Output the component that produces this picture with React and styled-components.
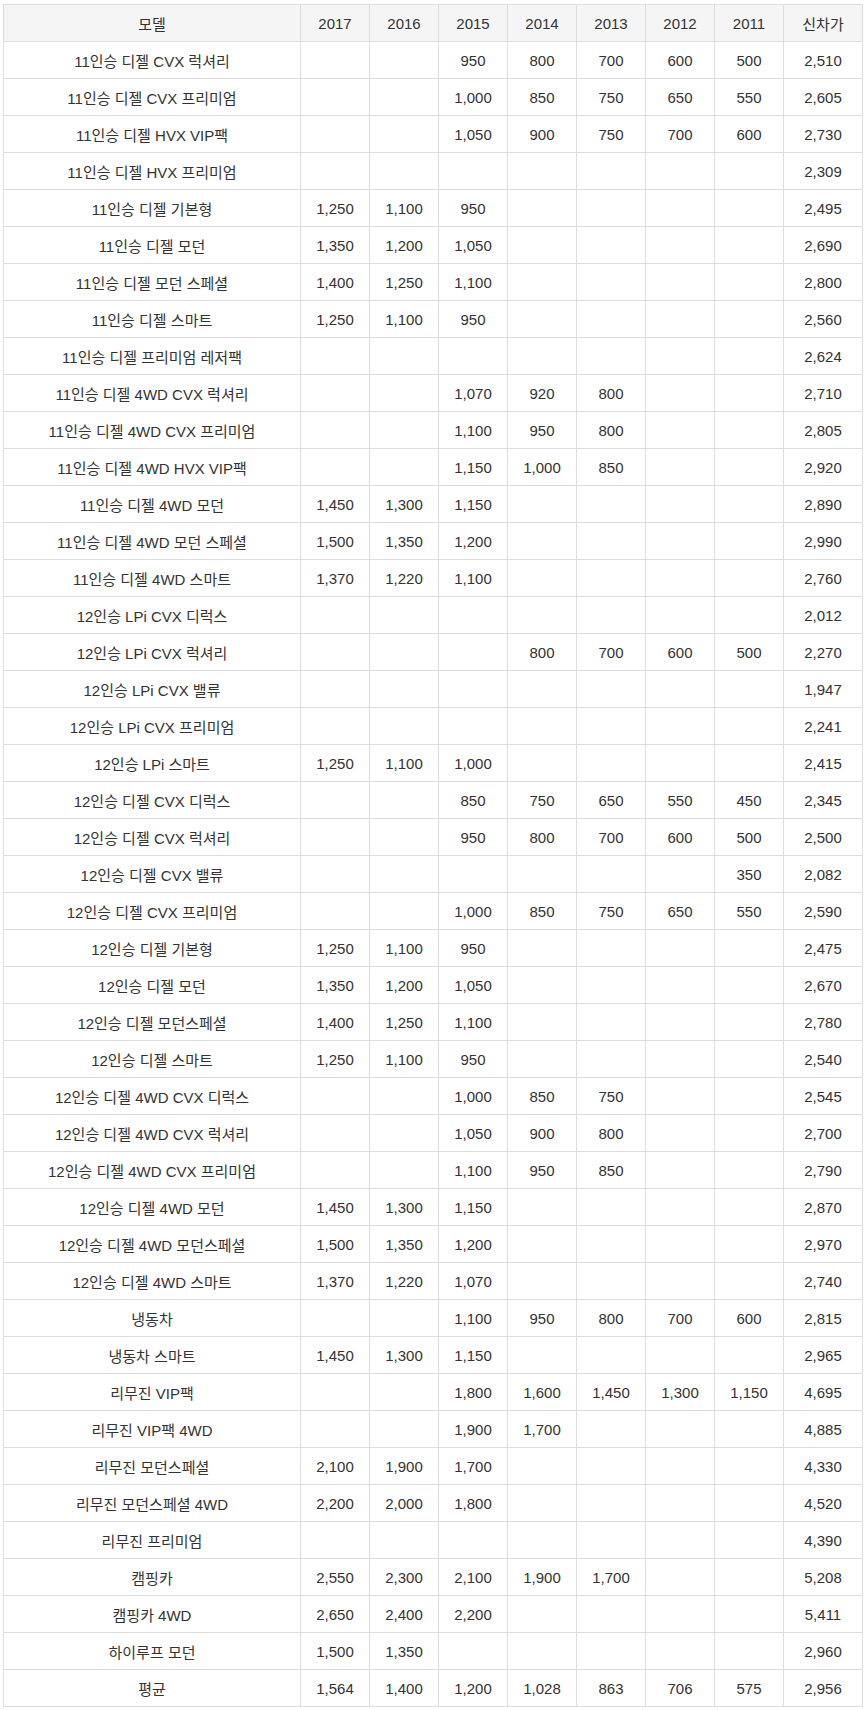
import styled, { createGlobalStyle } from "styled-components";

const GlobalStyle = createGlobalStyle`
  body {
    margin: 0;
    background: #fff;
  }
`;

const Wrapper = styled.div`
  padding: 4px 0 0 3px;
`;

const Table = styled.table`
  width: 860px;
  table-layout: fixed;
  border-collapse: collapse;
  font-family: "Liberation Sans", Arial, "Noto Sans CJK KR", sans-serif;
  font-size: 15px;
  color: #333;
`;

const HeadCell = styled.th`
  height: 36px;
  padding: 0 4px;
  border: 1px solid #ddd;
  background: #f5f5f5;
  font-weight: normal;
  text-align: center;
`;

const Cell = styled.td`
  height: 36px;
  padding: 0 4px;
  border: 1px solid #ddd;
  text-align: center;
  white-space: nowrap;
`;

const years = ["2017", "2016", "2015", "2014", "2013", "2012", "2011"];

const rows = [
  ["11인승 디젤 CVX 럭셔리", "", "", "950", "800", "700", "600", "500", "2,510"],
  ["11인승 디젤 CVX 프리미엄", "", "", "1,000", "850", "750", "650", "550", "2,605"],
  ["11인승 디젤 HVX VIP팩", "", "", "1,050", "900", "750", "700", "600", "2,730"],
  ["11인승 디젤 HVX 프리미엄", "", "", "", "", "", "", "", "2,309"],
  ["11인승 디젤 기본형", "1,250", "1,100", "950", "", "", "", "", "2,495"],
  ["11인승 디젤 모던", "1,350", "1,200", "1,050", "", "", "", "", "2,690"],
  ["11인승 디젤 모던 스페셜", "1,400", "1,250", "1,100", "", "", "", "", "2,800"],
  ["11인승 디젤 스마트", "1,250", "1,100", "950", "", "", "", "", "2,560"],
  ["11인승 디젤 프리미엄 레저팩", "", "", "", "", "", "", "", "2,624"],
  ["11인승 디젤 4WD CVX 럭셔리", "", "", "1,070", "920", "800", "", "", "2,710"],
  ["11인승 디젤 4WD CVX 프리미엄", "", "", "1,100", "950", "800", "", "", "2,805"],
  ["11인승 디젤 4WD HVX VIP팩", "", "", "1,150", "1,000", "850", "", "", "2,920"],
  ["11인승 디젤 4WD 모던", "1,450", "1,300", "1,150", "", "", "", "", "2,890"],
  ["11인승 디젤 4WD 모던 스페셜", "1,500", "1,350", "1,200", "", "", "", "", "2,990"],
  ["11인승 디젤 4WD 스마트", "1,370", "1,220", "1,100", "", "", "", "", "2,760"],
  ["12인승 LPi CVX 디럭스", "", "", "", "", "", "", "", "2,012"],
  ["12인승 LPi CVX 럭셔리", "", "", "", "800", "700", "600", "500", "2,270"],
  ["12인승 LPi CVX 밸류", "", "", "", "", "", "", "", "1,947"],
  ["12인승 LPi CVX 프리미엄", "", "", "", "", "", "", "", "2,241"],
  ["12인승 LPi 스마트", "1,250", "1,100", "1,000", "", "", "", "", "2,415"],
  ["12인승 디젤 CVX 디럭스", "", "", "850", "750", "650", "550", "450", "2,345"],
  ["12인승 디젤 CVX 럭셔리", "", "", "950", "800", "700", "600", "500", "2,500"],
  ["12인승 디젤 CVX 밸류", "", "", "", "", "", "", "350", "2,082"],
  ["12인승 디젤 CVX 프리미엄", "", "", "1,000", "850", "750", "650", "550", "2,590"],
  ["12인승 디젤 기본형", "1,250", "1,100", "950", "", "", "", "", "2,475"],
  ["12인승 디젤 모던", "1,350", "1,200", "1,050", "", "", "", "", "2,670"],
  ["12인승 디젤 모던스페셜", "1,400", "1,250", "1,100", "", "", "", "", "2,780"],
  ["12인승 디젤 스마트", "1,250", "1,100", "950", "", "", "", "", "2,540"],
  ["12인승 디젤 4WD CVX 디럭스", "", "", "1,000", "850", "750", "", "", "2,545"],
  ["12인승 디젤 4WD CVX 럭셔리", "", "", "1,050", "900", "800", "", "", "2,700"],
  ["12인승 디젤 4WD CVX 프리미엄", "", "", "1,100", "950", "850", "", "", "2,790"],
  ["12인승 디젤 4WD 모던", "1,450", "1,300", "1,150", "", "", "", "", "2,870"],
  ["12인승 디젤 4WD 모던스페셜", "1,500", "1,350", "1,200", "", "", "", "", "2,970"],
  ["12인승 디젤 4WD 스마트", "1,370", "1,220", "1,070", "", "", "", "", "2,740"],
  ["냉동차", "", "", "1,100", "950", "800", "700", "600", "2,815"],
  ["냉동차 스마트", "1,450", "1,300", "1,150", "", "", "", "", "2,965"],
  ["리무진 VIP팩", "", "", "1,800", "1,600", "1,450", "1,300", "1,150", "4,695"],
  ["리무진 VIP팩 4WD", "", "", "1,900", "1,700", "", "", "", "4,885"],
  ["리무진 모던스페셜", "2,100", "1,900", "1,700", "", "", "", "", "4,330"],
  ["리무진 모던스페셜 4WD", "2,200", "2,000", "1,800", "", "", "", "", "4,520"],
  ["리무진 프리미엄", "", "", "", "", "", "", "", "4,390"],
  ["캠핑카", "2,550", "2,300", "2,100", "1,900", "1,700", "", "", "5,208"],
  ["캠핑카 4WD", "2,650", "2,400", "2,200", "", "", "", "", "5,411"],
  ["하이루프 모던", "1,500", "1,350", "", "", "", "", "", "2,960"],
  ["평균", "1,564", "1,400", "1,200", "1,028", "863", "706", "575", "2,956"],
];

export default function App() {
  return (
    <Wrapper>
      <GlobalStyle />
      <Table>
        <colgroup>
          <col style={{ width: 297 }} />
          {years.map((year) => (
            <col key={year} style={{ width: 69 }} />
          ))}
          <col />
        </colgroup>
        <thead>
          <tr>
            <HeadCell>모델</HeadCell>
            {years.map((year) => (
              <HeadCell key={year}>{year}</HeadCell>
            ))}
            <HeadCell>신차가</HeadCell>
          </tr>
        </thead>
        <tbody>
          {rows.map((row) => (
            <tr key={row[0]}>
              {row.map((value, i) => (
                <Cell key={i}>{value}</Cell>
              ))}
            </tr>
          ))}
        </tbody>
      </Table>
    </Wrapper>
  );
}
